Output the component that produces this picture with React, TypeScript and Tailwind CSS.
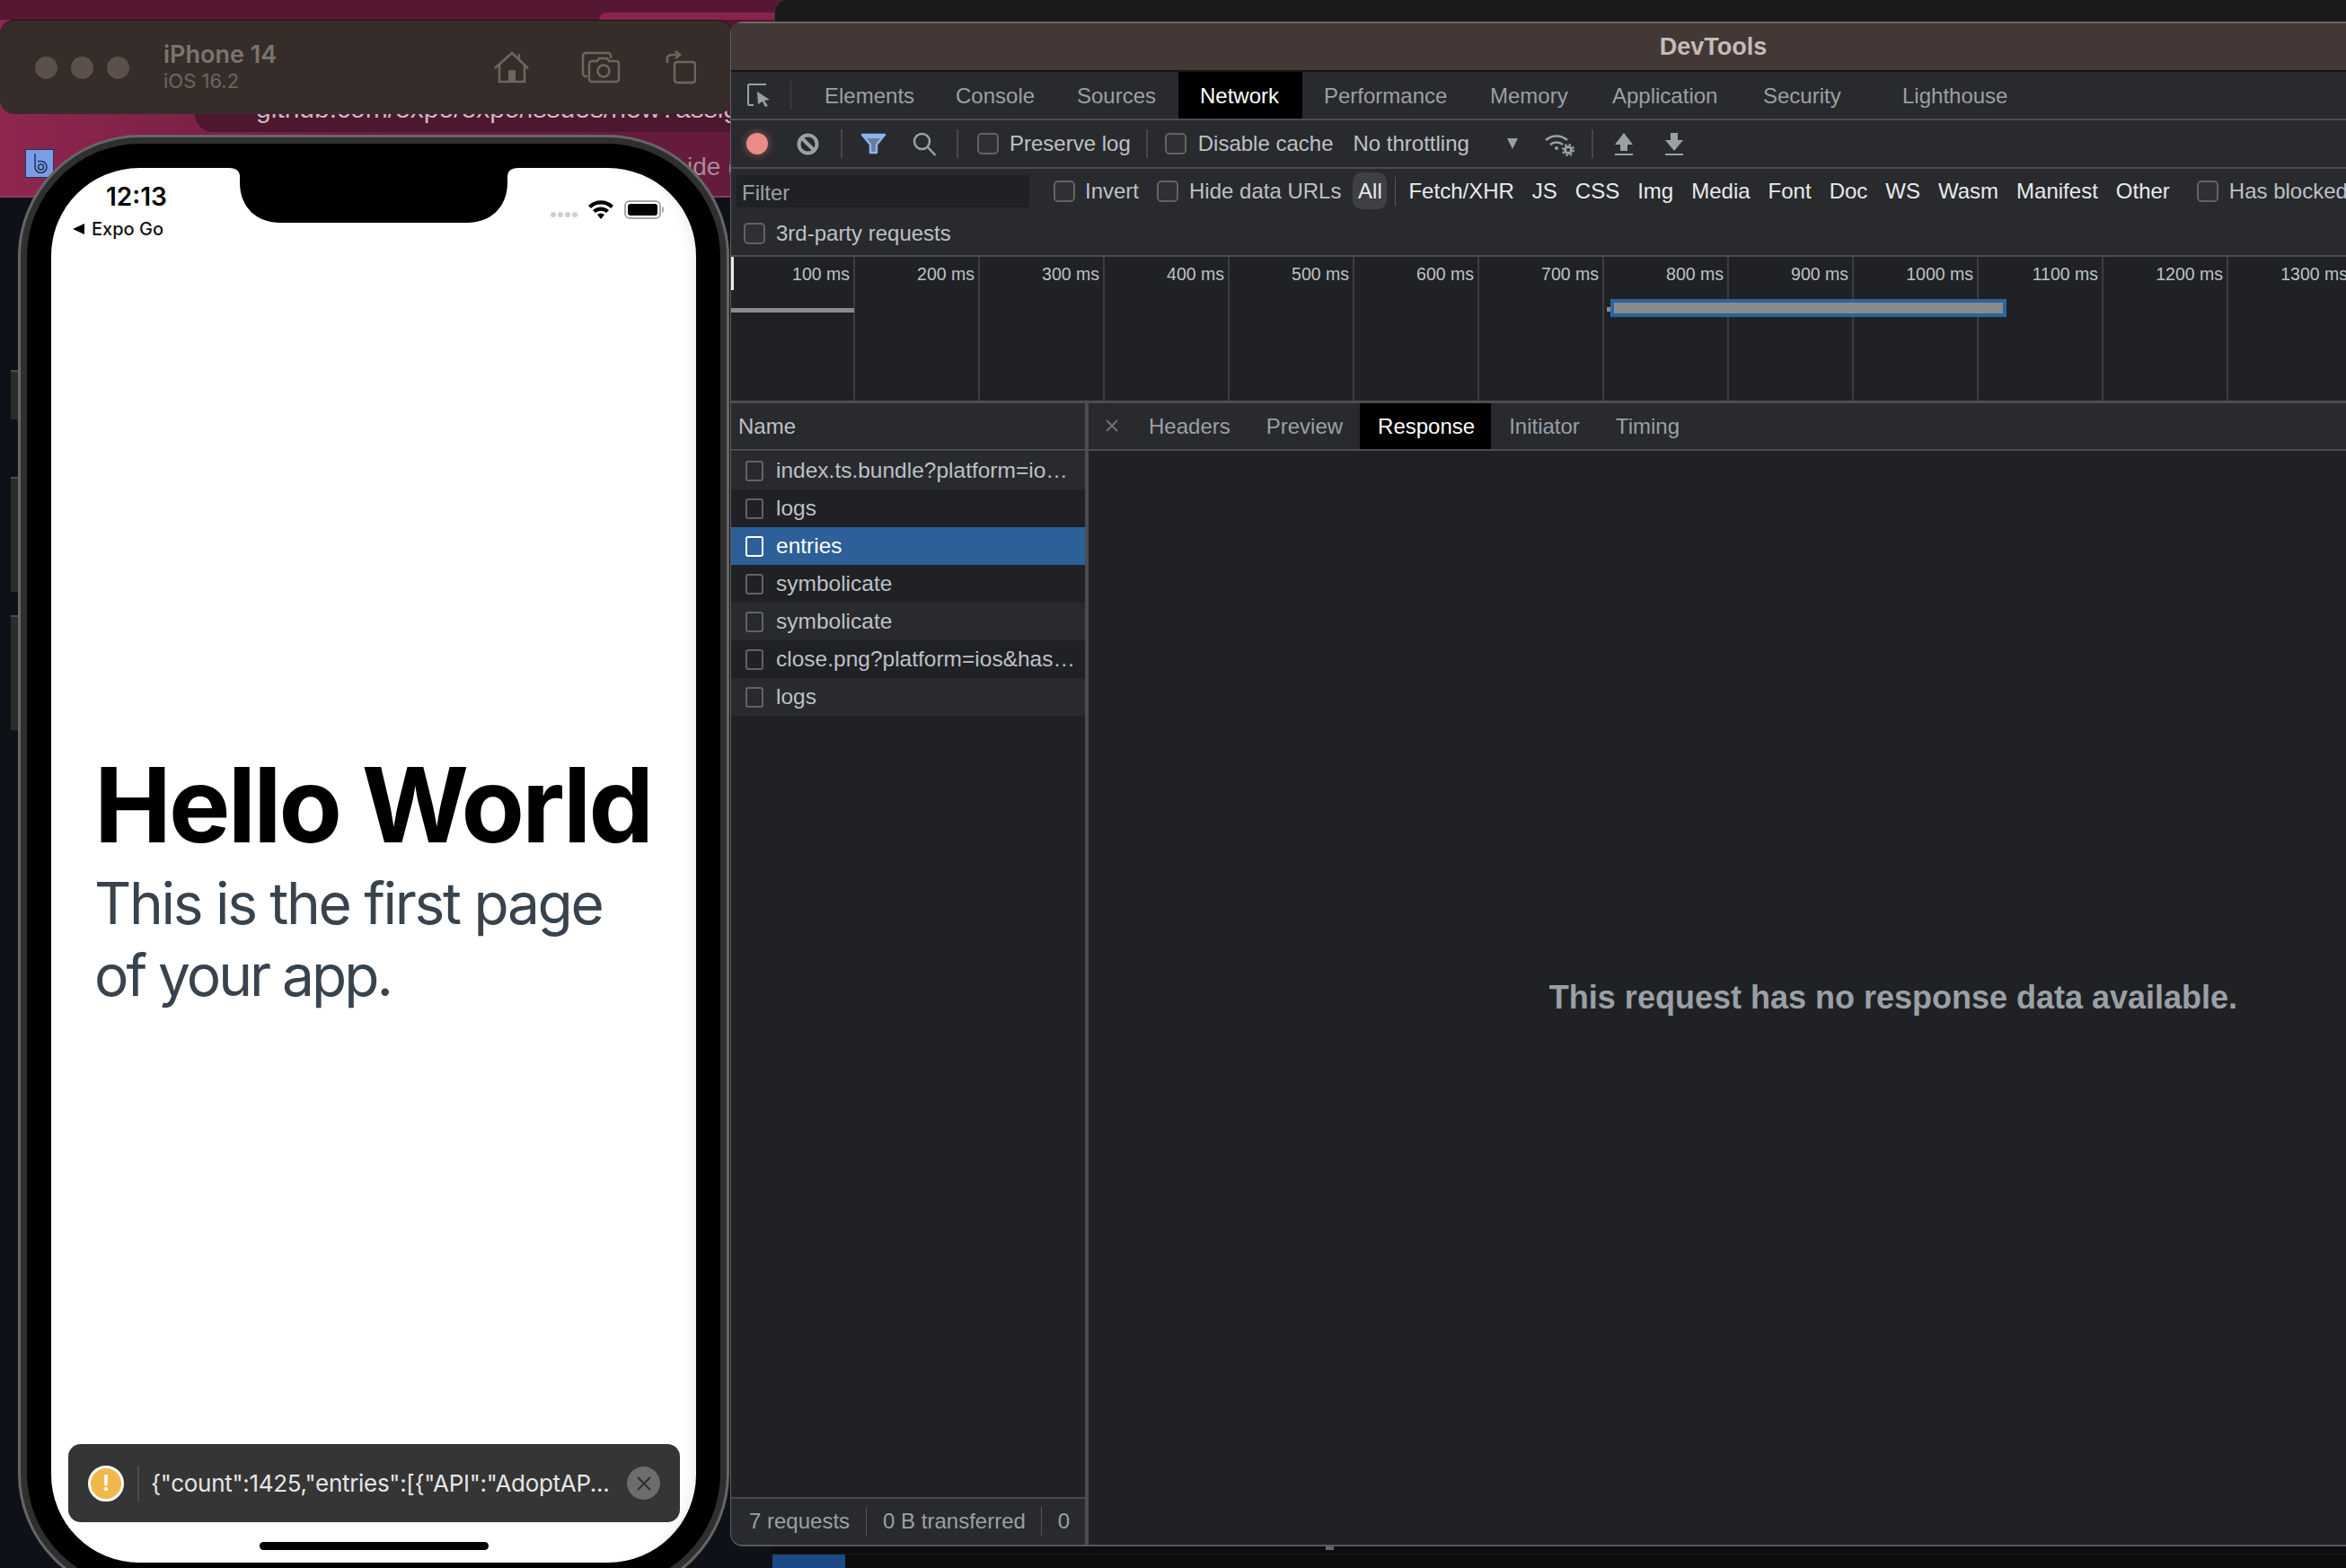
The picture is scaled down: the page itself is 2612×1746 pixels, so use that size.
import React from "react";

const mainTabs = [
  { name: "Elements", w: "w-[146px]" },
  { name: "Console", w: "w-[135px]" },
  { name: "Sources", w: "w-[137px]" },
  { name: "Network", w: "w-[138px]" },
  { name: "Performance", w: "w-[185px]" },
  { name: "Memory", w: "w-[136px]" },
  { name: "Application", w: "w-[168px]" },
  { name: "Security", w: "w-[155px]" },
  { name: "Lighthouse", w: "w-[160px]" },
];
const chips = ["JS", "CSS", "Img", "Media", "Font", "Doc", "WS", "Wasm", "Manifest", "Other"];
const ticks = [100, 200, 300, 400, 500, 600, 700, 800, 900, 1000, 1100, 1200, 1300, 1400, 1500];
const requests = [
  { name: "index.ts.bundle?platform=io…", bg: "bg-[#292a2d]" },
  { name: "logs", bg: "bg-[#202124]" },
  { name: "entries", bg: "bg-[#2d5f98]", selected: true },
  { name: "symbolicate", bg: "bg-[#202124]" },
  { name: "symbolicate", bg: "bg-[#292a2d]" },
  { name: "close.png?platform=ios&has…", bg: "bg-[#202124]" },
  { name: "logs", bg: "bg-[#292a2d]" },
];

const Check = () => (
  <div className="w-6 h-6 shrink-0 rounded-[5px] border-2 border-[#5f6368] bg-[#2f3033]" />
);

const Sep = ({ ml }: { ml: string }) => <div className={`w-[2px] h-8 shrink-0 bg-[#45474b] ${ml}`} />;

const SimIcons = () => (
  <div className="flex items-center ml-auto text-[#6f6560]">
    <svg width="40" height="36" viewBox="0 0 40 36" fill="none" stroke="currentColor" strokeWidth="2.5" className="shrink-0">
      <path d="M1 19 20 2l18 17M6 15v19h28V15M28 8V3" />
      <rect x="16" y="21" width="8" height="13" fill="currentColor" stroke="none" />
    </svg>
    <svg width="44" height="36" viewBox="0 0 44 36" fill="none" stroke="currentColor" strokeWidth="2.5" className="shrink-0 ml-[57px]">
      <path d="M7 28H5a3 3 0 0 1-3-3V5a3 3 0 0 1 3-3h25a3 3 0 0 1 3 3v3" />
      <path d="M12 11h6l2-3h9l2 3h8a3 3 0 0 1 3 3v17a3 3 0 0 1-3 3H12a3 3 0 0 1-3-3V14a3 3 0 0 1 3-3Z" />
      <circle cx="25" cy="22" r="6.5" />
    </svg>
    <svg width="34" height="38" viewBox="0 0 34 38" fill="none" stroke="currentColor" strokeWidth="2.5" className="shrink-0 ml-[50px] mr-[40px]">
      <rect x="10" y="13" width="23" height="23" rx="3" />
      <path d="M2 14V9a4 4 0 0 1 4-4h8" />
      <path d="M11 1l5 4-5 4" />
    </svg>
  </div>
);

const Phone = () => (
  <div className="absolute left-[20px] top-[150px] w-[792px] h-[1627px] rounded-[136px] border-[3px] border-[#666666] bg-[#2f2f2f] p-[7px]">
    <div className="h-full rounded-[126px] bg-black p-[27px]">
      <div className="relative h-full rounded-[98px] overflow-hidden bg-white shadow-[inset_-14px_0_18px_-14px_rgba(0,0,0,0.12)] font-[Inter,sans-serif]">
        <svg width="322" height="61" viewBox="0 0 322 61" className="absolute left-[198px] top-0">
          <path d="M0 0H322Q310 0 310 10V16C310 45 290 61 265 61H57C32 61 12 45 12 16V10Q12 0 0 0Z" fill="#000" />
        </svg>

        <div className="absolute left-[24px] top-[15px] flex flex-col">
          <span className="ml-[37px] text-[28px] leading-[34px] font-semibold text-black">12:13</span>
          <div className="flex items-center mt-[7px]">
            <div className="w-0 h-0 border-y-[6px] border-y-transparent border-r-[13px] border-r-black" />
            <span className="ml-[8px] text-[20px] leading-[24px] font-medium text-[#111111]">Expo Go</span>
          </div>
        </div>

        <div className="absolute left-[556px] top-[35px] flex items-center">
          <div className="flex gap-[2px]">
            {[0, 1, 2, 3].map((d) => (
              <div key={d} className="w-[6px] h-[6px] mt-[12px] rounded-full bg-[#cfcfcf]" />
            ))}
          </div>
          <svg width="30" height="22" viewBox="0 0 30 22" className="ml-[11px] shrink-0">
            <path d="M1 7a20 20 0 0 1 28 0l-3 3a16 16 0 0 0-22 0Z M6 12a13 13 0 0 1 18 0l-3 3a9 9 0 0 0-12 0Z M11 17a6 6 0 0 1 8 0l-4 5Z" fill="#000" />
          </svg>
          <div className="ml-[11px] w-[41px] h-[21px] p-[2px] rounded-[6px] border-2 border-[#a8a8a8]">
            <div className="h-full rounded-[3px] bg-black" />
          </div>
          <div className="ml-[1px] w-[2px] h-[7px] rounded-r-full bg-[#a8a8a8]" />
        </div>

        <div className="pt-[650px] pl-[48px]">
          <h1 className="text-[115px] leading-[120px] font-bold text-black tracking-[-2.8px] whitespace-nowrap">Hello World</h1>
          <p className="mt-[9px] text-[64px] leading-[80px] text-[#38434d] tracking-[-2.3px] whitespace-nowrap">This is the first page</p>
          <p className="text-[64px] leading-[80px] text-[#38434d] tracking-[-3px] whitespace-nowrap">of your app.</p>
        </div>

        <div className="absolute left-[19px] bottom-[45px] w-[681px] h-[87px] flex items-center rounded-[14px] bg-[#353535]">
          <div className="ml-[22px] w-10 h-10 shrink-0 flex items-center justify-center rounded-full border-[3px] border-white bg-[#efb848] text-white text-[24px] font-bold">
            !
          </div>
          <div className="ml-[15px] w-[2px] h-10 shrink-0 bg-[#4c4c4c]" />
          <span className="ml-[13px] text-[26px] text-[#e6e6e6] tracking-[-0.3px] whitespace-nowrap">{'{"count":1425,"entries":[{"API":"AdoptAP...'}</span>
          <div className="ml-auto mr-[22px] w-[37px] h-[37px] shrink-0 flex items-center justify-center rounded-full bg-[#6d6d6d]">
            <svg width="16" height="16" viewBox="0 0 16 16" stroke="#2f2f2f" strokeWidth="2">
              <path d="M1 1l14 14M15 1 1 15" />
            </svg>
          </div>
        </div>

        <div className="absolute left-[232px] bottom-[14px] w-[255px] h-[9px] rounded-full bg-black" />
      </div>
    </div>
  </div>
);

const DevTools = () => (
  <div className="absolute left-[813px] top-[24px] w-[2191px] h-[1698px] flex flex-col overflow-hidden rounded-l-[14px] border-l border-b-2 border-l-[#5c5f63] border-b-[#55585c] bg-[#202124] font-['Liberation_Sans',sans-serif] text-[24px] text-[#bdc1c6]">
    <div className="h-[56px] shrink-0 flex items-center justify-center border-t-2 border-t-[#6e6663] border-b-2 border-b-[#141414] bg-[#433836]">
      <span className="mr-[3px] text-[27px] font-bold text-[#c4bcb9]">DevTools</span>
    </div>

    <div className="h-[54px] shrink-0 flex items-center border-b-2 border-[#494c50] bg-[#292a2d]">
      <svg width="27" height="26" viewBox="0 0 27 26" fill="none" className="ml-[18px] shrink-0">
        <path d="M20 2V1H2Q1 1 1 2v21q0 1 1 1h5" stroke="#9aa0a6" strokeWidth="2" />
        <path d="M11 9l14 9-6 1 4 6-3 1-3-6-5 3Z" fill="#9aa0a6" />
      </svg>
      <div className="ml-[21px] w-[1px] h-8 shrink-0 bg-[#45474b]" />
      <div className="ml-[13px] flex h-full">
        {mainTabs.map((t) => (
          <div key={t.name} className={`h-full shrink-0 flex items-center pl-[24px] pt-[2px] ${t.w} ${t.name === "Network" ? "bg-black text-white" : "text-[#9aa0a6]"}`}>
            {t.name}
          </div>
        ))}
      </div>
    </div>

    <div className="h-[54px] shrink-0 flex items-center border-b-2 border-[#494c50] bg-[#292a2d] whitespace-nowrap">
      <div className="ml-[17px] w-6 h-6 shrink-0 rounded-full bg-[#e98b86] shadow-[0_0_6px_3px_rgba(233,139,134,0.25)]" />
      <svg width="25" height="25" viewBox="0 0 25 25" fill="none" stroke="#9aa0a6" strokeWidth="4" className="ml-[32px] shrink-0">
        <circle cx="12.5" cy="12.5" r="10" />
        <path d="M5.5 5.5l14 14" />
      </svg>
      <Sep ml="ml-[24px]" />
      <svg width="29" height="24" viewBox="0 0 29 24" className="ml-[20px] shrink-0">
        <path d="M2 2H27L18 13V22H11V13Z" fill="#6b7c96" stroke="#8ab4f8" strokeWidth="2.5" strokeLinejoin="round" />
        <path d="M2 2H27L24 6H5Z" fill="#8ab4f8" />
      </svg>
      <svg width="27" height="27" viewBox="0 0 27 27" fill="none" stroke="#9aa0a6" strokeWidth="2.5" className="ml-[29px] shrink-0">
        <circle cx="10.5" cy="10.5" r="8.5" />
        <path d="M16.5 16.5l9 9.5" />
      </svg>
      <Sep ml="ml-[22px]" />
      <div className="ml-[21px]"><Check /></div>
      <span className="ml-[12px]">Preserve log</span>
      <Sep ml="ml-[17px]" />
      <div className="ml-[19px]"><Check /></div>
      <span className="ml-[13px]">Disable cache</span>
      <span className="ml-[22px]">No throttling</span>
      <div className="ml-[42px] w-0 h-0 border-x-[6px] border-x-transparent border-t-[12px] border-t-[#9aa0a6]" />
      <svg width="33" height="27" viewBox="0 0 33 27" fill="none" stroke="#9aa0a6" strokeWidth="2.5" className="ml-[30px] shrink-0">
        <path d="M1 9a18 18 0 0 1 24 0M6 14a11 11 0 0 1 14 0" />
        <circle cx="13" cy="18" r="2" fill="#9aa0a6" stroke="none" />
        <circle cx="26" cy="20" r="3.5" strokeWidth="3" />
        <circle cx="26" cy="20" r="6" strokeWidth="2" strokeDasharray="2.5 2.2" />
      </svg>
      <Sep ml="ml-[19px]" />
      <svg width="20" height="25" viewBox="0 0 20 25" fill="#9aa0a6" className="ml-[24px] shrink-0">
        <path d="M10 0 20 13H14V20H6V13H0ZM0 23H20V25H0Z" />
      </svg>
      <svg width="20" height="25" viewBox="0 0 20 25" fill="#9aa0a6" className="ml-[36px] shrink-0">
        <path d="M6 0H14V8H20L10 20 0 8H6ZM0 23H20V25H0Z" />
      </svg>
    </div>

    <div className="h-[98px] shrink-0 flex flex-col border-b-2 border-[#494c50] bg-[#292a2d] whitespace-nowrap">
      <div className="h-[48px] shrink-0 flex items-center pt-[1px]">
        <div className="ml-[6px] w-[326px] h-[36px] flex items-center pl-[6px] pt-[5px] bg-[#202124] text-[#9aa0a6]">Filter</div>
        <div className="ml-[27px]"><Check /></div>
        <span className="ml-[11px]">Invert</span>
        <div className="ml-[20px]"><Check /></div>
        <span className="ml-[12px]">Hide data URLs</span>
        <div className="ml-[13px] w-[38px] h-[41px] flex items-center justify-center rounded-[10px] bg-[#3f4043] text-[#e8eaed]">All</div>
        <div className="ml-[9px] w-[1px] h-[32px] bg-[#55585c]" />
        <span className="ml-[14px] text-[#e8eaed]">Fetch/XHR</span>
        <div className="ml-[20px] flex gap-[20px] text-[#e8eaed]">
          {chips.map((c) => (
            <span key={c}>{c}</span>
          ))}
        </div>
        <div className="ml-[30px]"><Check /></div>
        <span className="ml-[12px]">Has blocked cookies</span>
      </div>
      <div className="h-[48px] shrink-0 flex items-center">
        <div className="ml-[14px]"><Check /></div>
        <span className="ml-[12px]">3rd-party requests</span>
      </div>
    </div>

    <div className="relative h-[163px] shrink-0 flex border-b-[3px] border-[#494c50] text-[19.5px]">
      {ticks.map((t, i) => (
        <div
          key={t}
          className={`h-full shrink-0 border-r-2 border-[#3c3d40] pr-[4px] pt-[5px] text-right whitespace-nowrap ${i === 0 ? "w-[138px]" : "w-[139px]"}`}
        >
          {t} ms
        </div>
      ))}
      <div className="absolute left-0 top-0 w-[3px] h-[37px] bg-[#e8eaed]" />
      <div className="absolute left-0 top-[57px] w-[137px] h-[5px] bg-[#8a8a8a]" />
      <div className="absolute left-[975px] top-[56px] w-[4px] h-[5px] bg-[#8a8a8a]" />
      <div className="absolute left-[979px] top-[47px] w-[441px] h-[20px] border-[4px] border-[#2d649f] bg-[#8a8a8a]" />
    </div>

    <div className="flex-1 min-h-0 flex">
      <div className="w-[398px] shrink-0 flex flex-col border-r-4 border-[#494c50]">
        <div className="h-[53px] shrink-0 flex items-center pl-[8px] border-b-2 border-[#494c50] bg-[#292a2d]">Name</div>
        <div className="flex-1 flex flex-col pt-[1px]">
          {requests.map((r, i) => (
            <div key={i} className={`h-[42px] shrink-0 flex items-center pl-[16px] whitespace-nowrap ${r.bg} ${r.selected ? "text-white" : ""}`}>
              <div className={`w-[20px] h-[23px] shrink-0 rounded-[3px] border-2 ${r.selected ? "border-white" : "border-[#5f6368]"}`} />
              <span className="ml-[14px] pt-[1px] text-[24.5px]">{r.name}</span>
            </div>
          ))}
        </div>
        <div className="h-[53px] shrink-0 flex items-center pb-[2px] border-t-2 border-[#494c50] bg-[#292a2d] text-[#9aa0a6] whitespace-nowrap">
          <span className="ml-[20px]">7 requests</span>
          <div className="ml-[18px] w-px h-[32px] bg-[#55585c]" />
          <span className="ml-[18px]">0 B transferred</span>
          <div className="ml-[17px] w-px h-[32px] bg-[#55585c]" />
          <span className="ml-[18px]">0</span>
        </div>
      </div>
      <div className="flex-1 min-w-0 flex flex-col">
        <div className="h-[53px] shrink-0 flex items-center border-b-2 border-[#494c50] bg-[#292a2d] text-[#9aa0a6]">
          <svg width="14" height="14" viewBox="0 0 14 14" stroke="#6e7175" strokeWidth="2" className="ml-[19px] mb-[2px] shrink-0">
            <path d="M1 1l12 12M13 1 1 13" />
          </svg>
          <div className="ml-[14px] flex h-full">
            {["Headers", "Preview", "Response", "Initiator", "Timing"].map((t) => (
              <div key={t} className={`h-full flex items-center px-[20px] ${t === "Response" ? "bg-black text-white pr-[18px]" : ""} ${t === "Preview" ? "pr-[19px]" : ""}`}>
                {t}
              </div>
            ))}
          </div>
        </div>
        <div className="flex-1 flex items-center justify-center">
          <p className="text-[36px] font-bold text-[#9aa0a6] whitespace-nowrap">This request has no response data available.</p>
        </div>
      </div>
    </div>
  </div>
);

const App = () => {
  return (
    <div className="relative w-[2612px] h-[1746px] overflow-hidden bg-[#0e1218] font-['Liberation_Sans',sans-serif]">
      {/* browser window behind the simulator */}
      <div className="absolute left-0 top-0 w-[880px] h-[220px] border-b-2 border-[#8a3d5e] bg-gradient-to-r from-[#8f2650] via-[#6a1c3e] to-[#641b3b]">
        <div className="h-[22px] bg-[#561732] flex justify-end">
          <div className="mt-[14px] w-[213px] h-[8px] rounded-tl-[14px] bg-[#8a2250]" />
        </div>
        <div className="ml-[217px] h-[125px] rounded-b-[20px] bg-[#4e1730] pl-[68px] pt-[81px] text-[30px] leading-[36px] text-[#cdb8c2] whitespace-nowrap overflow-hidden">
          github.com/expo/expo/issues/new?assig
        </div>
      </div>
      <div className="absolute left-[765px] top-[165px] text-[28px] text-[#a98a9a]">ide (</div>
      <svg width="32" height="32" viewBox="0 0 32 32" fill="none" className="absolute left-[28px] top-[166px]">
        <rect x="0.5" y="0.5" width="31" height="31" fill="#7d9ce8" stroke="#1d3557" />
        <path d="M11 5v15a6.5 6.5 0 1 0 6.5-6.5H14" stroke="#1d3557" strokeWidth="1.5" />
        <circle cx="17.5" cy="20" r="3" stroke="#1d3557" strokeWidth="1.5" />
      </svg>

      {/* window behind devtools */}
      <div className="absolute left-[862px] top-0 w-[1750px] h-[30px] rounded-tl-[14px] border-l border-[#3a3a3a] bg-[#1a1a1a]" />

      {/* phone side buttons */}
      <div className="absolute left-[12px] top-[412px] w-[8px] h-[55px] border-t-2 border-[#4a4a4a] bg-[#2c2c2c]" />
      <div className="absolute left-[12px] top-[531px] w-[8px] h-[128px] border-t-2 border-[#4a4a4a] bg-[#2c2c2c]" />
      <div className="absolute left-[12px] top-[685px] w-[8px] h-[128px] border-t-2 border-[#4a4a4a] bg-[#2c2c2c]" />

      <div className="absolute left-0 top-[22px] w-[815px] h-[105px] flex items-center rounded-[16px] border-t border-[#1b1614] bg-[#362d2a]">
        <div className="ml-[39px] flex gap-[15px]">
          {[0, 1, 2].map((d) => (
            <div key={d} className="w-[25px] h-[25px] rounded-full bg-[#5b504c]" />
          ))}
        </div>
        <div className="ml-[38px] flex flex-col font-[Inter,sans-serif] text-[#7d736e]">
          <span className="text-[27px] leading-[30px] font-semibold">iPhone 14</span>
          <span className="text-[22px] leading-[28px] text-[#6f6560]">iOS 16.2</span>
        </div>
        <SimIcons />
      </div>

      <Phone />

      {/* strip under devtools */}
      <div className="absolute left-[860px] top-[1722px] w-[1752px] h-[24px] bg-[#0c0d0e]">
        <div className="h-[9px] border-b border-[#17181a]" />
        <div className="w-[81px] h-[15px] bg-[#1c4a85]" />
      </div>
      <div className="absolute left-[1476px] top-[1722px] w-[9px] h-[4px] bg-[#666666]" />

      <DevTools />
    </div>
  );
};

export default App;
